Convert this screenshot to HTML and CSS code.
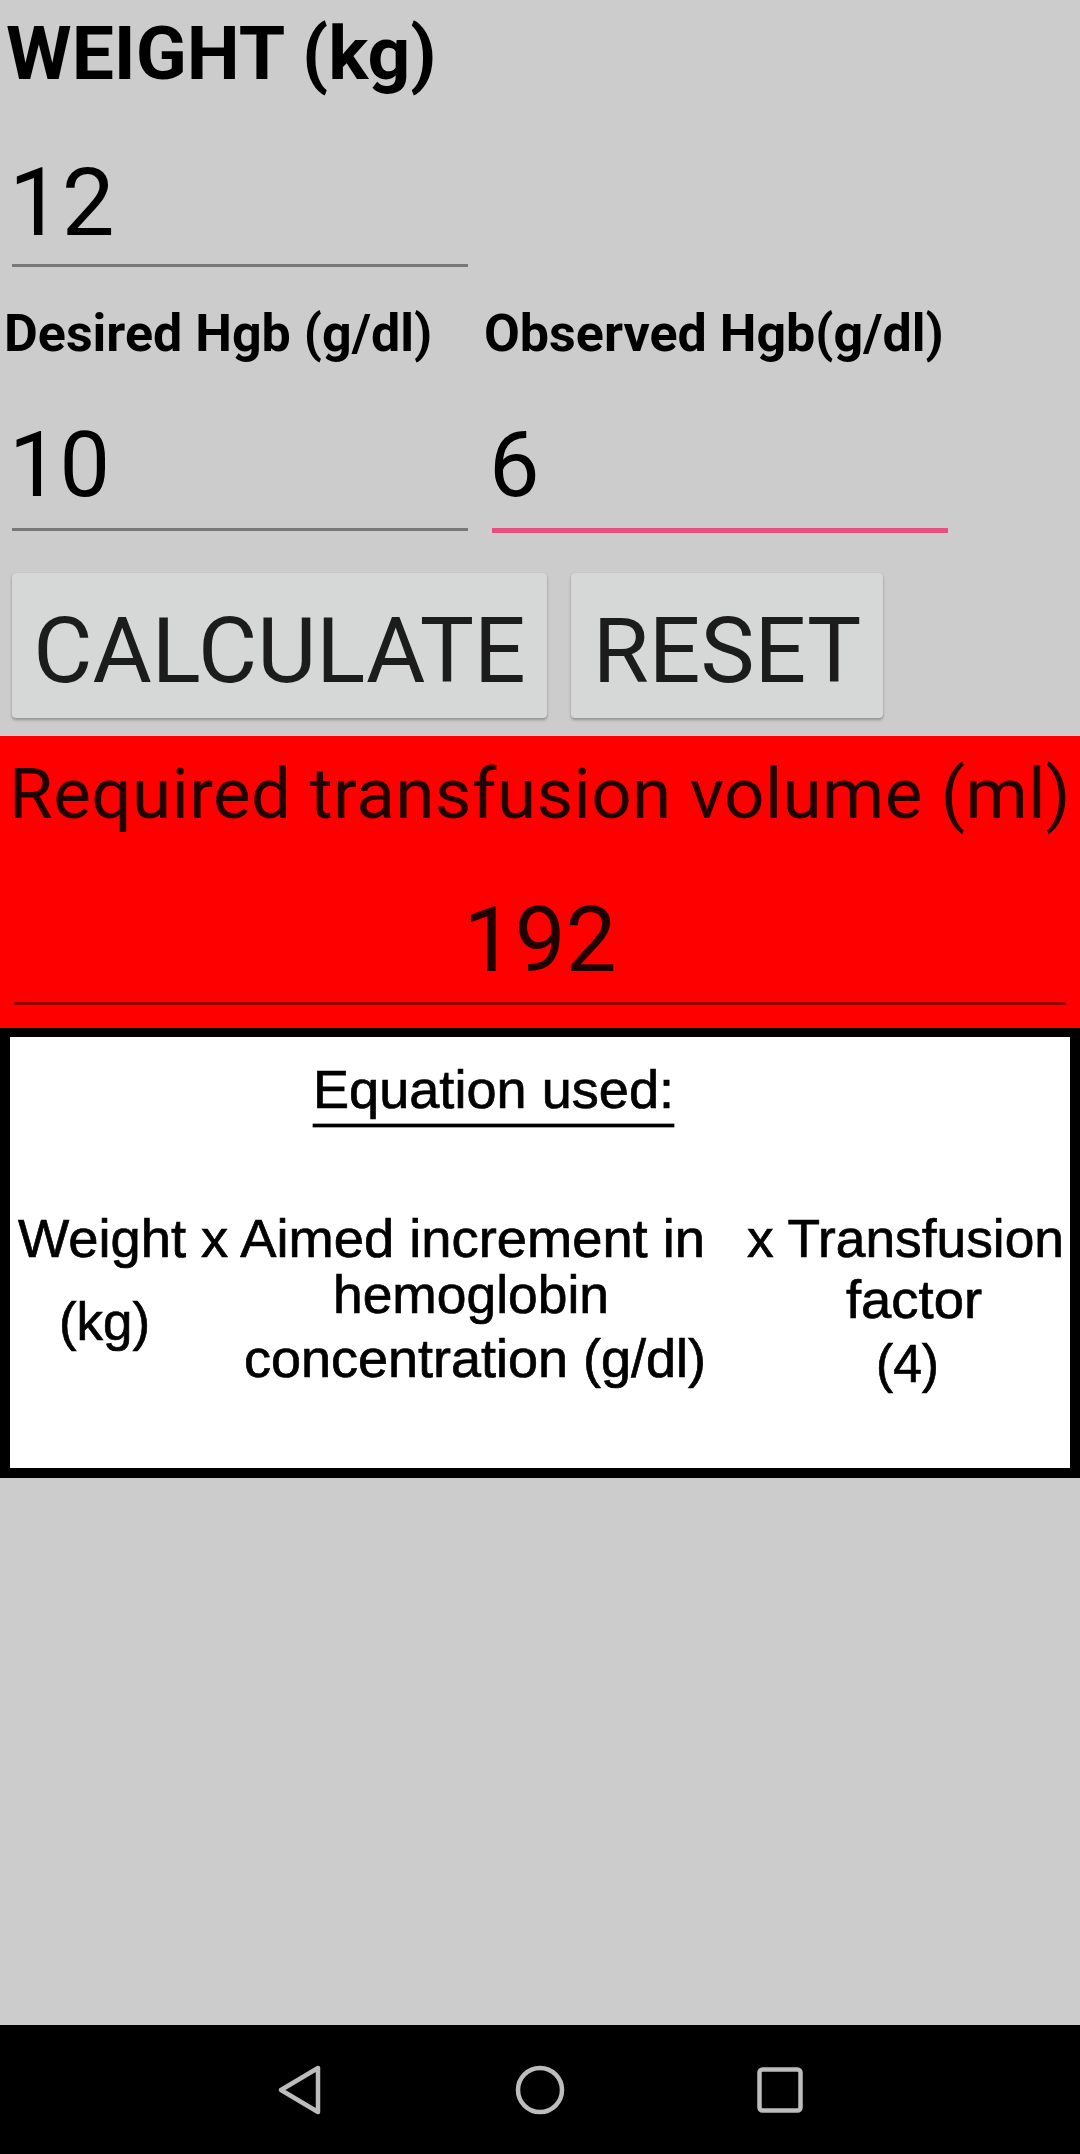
FILE: index.html
```html
<!DOCTYPE html>
<html lang="en">
<head>
<meta charset="utf-8">
<title>Transfusion volume</title>
<link rel="stylesheet" href="styles.css">
</head>
<body>
<div class="screen">
  <main class="app">
    <h1 class="title">WEIGHT (kg)</h1>

    <div class="field field-weight">
      <div class="field-value">12</div>
      <div class="field-line"></div>
    </div>

    <div class="hgb-grid">
      <div class="label">Desired Hgb (g/dl)</div>
      <div class="label">Observed Hgb(g/dl)</div>
      <div class="field field-hgb">
        <div class="field-value">10</div>
        <div class="field-line"></div>
      </div>
      <div class="field field-hgb is-focused">
        <div class="field-value">6</div>
        <div class="field-line"></div>
      </div>
    </div>

    <div class="actions">
      <button class="btn btn-calc" type="button">CALCULATE</button>
      <button class="btn btn-reset" type="button">RESET</button>
    </div>

    <section class="result">
      <div class="result-label">Required transfusion volume (ml)</div>
      <div class="result-value">192</div>
      <div class="result-line"></div>
    </section>

    <figure class="equation">
      <svg class="equation-art" width="1060" height="431" viewBox="0 0 1060 431">
        <text x="303" y="71" textLength="361" lengthAdjust="spacingAndGlyphs">Equation used:</text>
        <rect x="303" y="87" width="361" height="3"/>
        <text x="8" y="220" textLength="687" lengthAdjust="spacingAndGlyphs">Weight x Aimed increment in</text>
        <text x="737" y="220" textLength="317" lengthAdjust="spacingAndGlyphs">x Transfusion</text>
        <text x="323" y="276" textLength="276" lengthAdjust="spacingAndGlyphs">hemoglobin</text>
        <text x="836" y="281" textLength="136" lengthAdjust="spacingAndGlyphs">factor</text>
        <text x="49" y="303" textLength="91" lengthAdjust="spacingAndGlyphs">(kg)</text>
        <text x="234" y="340" textLength="462" lengthAdjust="spacingAndGlyphs">concentration (g/dl)</text>
        <text x="866" y="345" textLength="63" lengthAdjust="spacingAndGlyphs">(4)</text>
      </svg>
    </figure>
  </main>

  <nav class="navbar">
    <svg class="nav-icon" width="60" height="60" viewBox="0 0 60 60">
      <path d="M11 30 L48 8 L48 52 Z"/>
    </svg>
    <svg class="nav-icon" width="60" height="60" viewBox="0 0 60 60">
      <circle cx="30" cy="30" r="22"/>
    </svg>
    <svg class="nav-icon" width="60" height="60" viewBox="0 0 60 60">
      <rect x="9.5" y="9.5" width="41" height="41" rx="3"/>
    </svg>
  </nav>
</div>
</body>
</html>
```

FILE: styles.css
```css
* {
  box-sizing: border-box;
}

html,
body {
  margin: 0;
  padding: 0;
}

body {
  background: #cccccc;
  font-family: Roboto, "Noto Sans", sans-serif;
  color: rgba(0, 0, 0, 0.87);
}

.screen {
  width: 1080px;
  height: 2154px;
  display: flex;
  flex-direction: column;
}

.app {
  flex: 1;
  display: flex;
  flex-direction: column;
  align-items: flex-start;
}

/* Headline */
.title {
  margin: 16px 0 0;
  padding-left: 6px;
  font-size: 75px;
  line-height: 75px;
  font-weight: 700;
  color: #000;
}

/* Text inputs with a bottom rule */
.field {
  width: 456px;
  margin-left: 12px;
}

.field-value {
  margin-left: -3px;
  color: #000;
}

.field-line {
  height: 3px;
  background: #777777;
}

.field-weight {
  margin-top: 65px;
}

.field-weight .field-value {
  font-size: 94px;
  line-height: 94px;
}

.field-weight .field-line {
  margin-top: 14px;
}

.hgb-grid {
  margin-top: 41px;
  display: grid;
  grid-template-columns: 480px 480px;
  align-items: start;
}

.label {
  padding-left: 4px;
  font-size: 52px;
  line-height: 52px;
  font-weight: 700;
  color: #000;
}

.field-hgb {
  margin-top: 61px;
}

.field-hgb .field-value {
  font-size: 90px;
  line-height: 90px;
}

.field-hgb .field-line {
  margin-top: 17px;
}

.field.is-focused .field-line {
  height: 5px;
  background: #e6507f;
}

/* Buttons */
.actions {
  margin-top: 40px;
  margin-left: 12px;
  display: flex;
  gap: 24px;
}

.btn {
  height: 145px;
  padding: 11px 0 0;
  border: 0;
  border-radius: 4px;
  background: #d6d7d7;
  box-shadow: 0 2px 3px rgba(0, 0, 0, 0.28), 0 0 1px rgba(0, 0, 0, 0.12);
  font-family: Roboto, "Noto Sans", sans-serif;
  font-size: 91px;
  line-height: 91px;
  font-weight: 400;
  color: rgba(0, 0, 0, 0.87);
  text-align: center;
  display: block;
}

.btn-calc {
  width: 535px;
}

.btn-reset {
  width: 312px;
}

/* Result panel */
.result {
  align-self: stretch;
  margin-top: 18px;
  padding: 23px 14px 23px;
  background: #ff0000;
  text-align: center;
}

.result-label {
  margin: 0 -14px;
  font-size: 71px;
  line-height: 70px;
  letter-spacing: 0.4px;
  white-space: nowrap;
}

.result-value {
  margin-top: 66px;
  font-size: 91px;
  line-height: 91px;
}

.result-line {
  margin-top: 16px;
  height: 3px;
  background: rgba(0, 0, 0, 0.4);
}

/* Equation picture */
.equation {
  align-self: stretch;
  margin: 0;
  background: #ffffff;
  border: 10px solid #000000;
  border-top-width: 9px;
  line-height: 0;
}

.equation-art {
  display: block;
  font-family: "Liberation Sans", Arial, sans-serif;
  font-size: 53px;
  fill: #000000;
  stroke: #000000;
  stroke-width: 0.7;
}

/* System navigation bar */
.navbar {
  height: 129px;
  background: #000000;
  display: grid;
  grid-template-columns: repeat(3, 240px);
  justify-content: center;
  justify-items: center;
  align-items: center;
}

.nav-icon {
  display: block;
  fill: none;
  stroke: #bdbdbd;
  stroke-width: 4.5;
  stroke-linejoin: round;
}
```
